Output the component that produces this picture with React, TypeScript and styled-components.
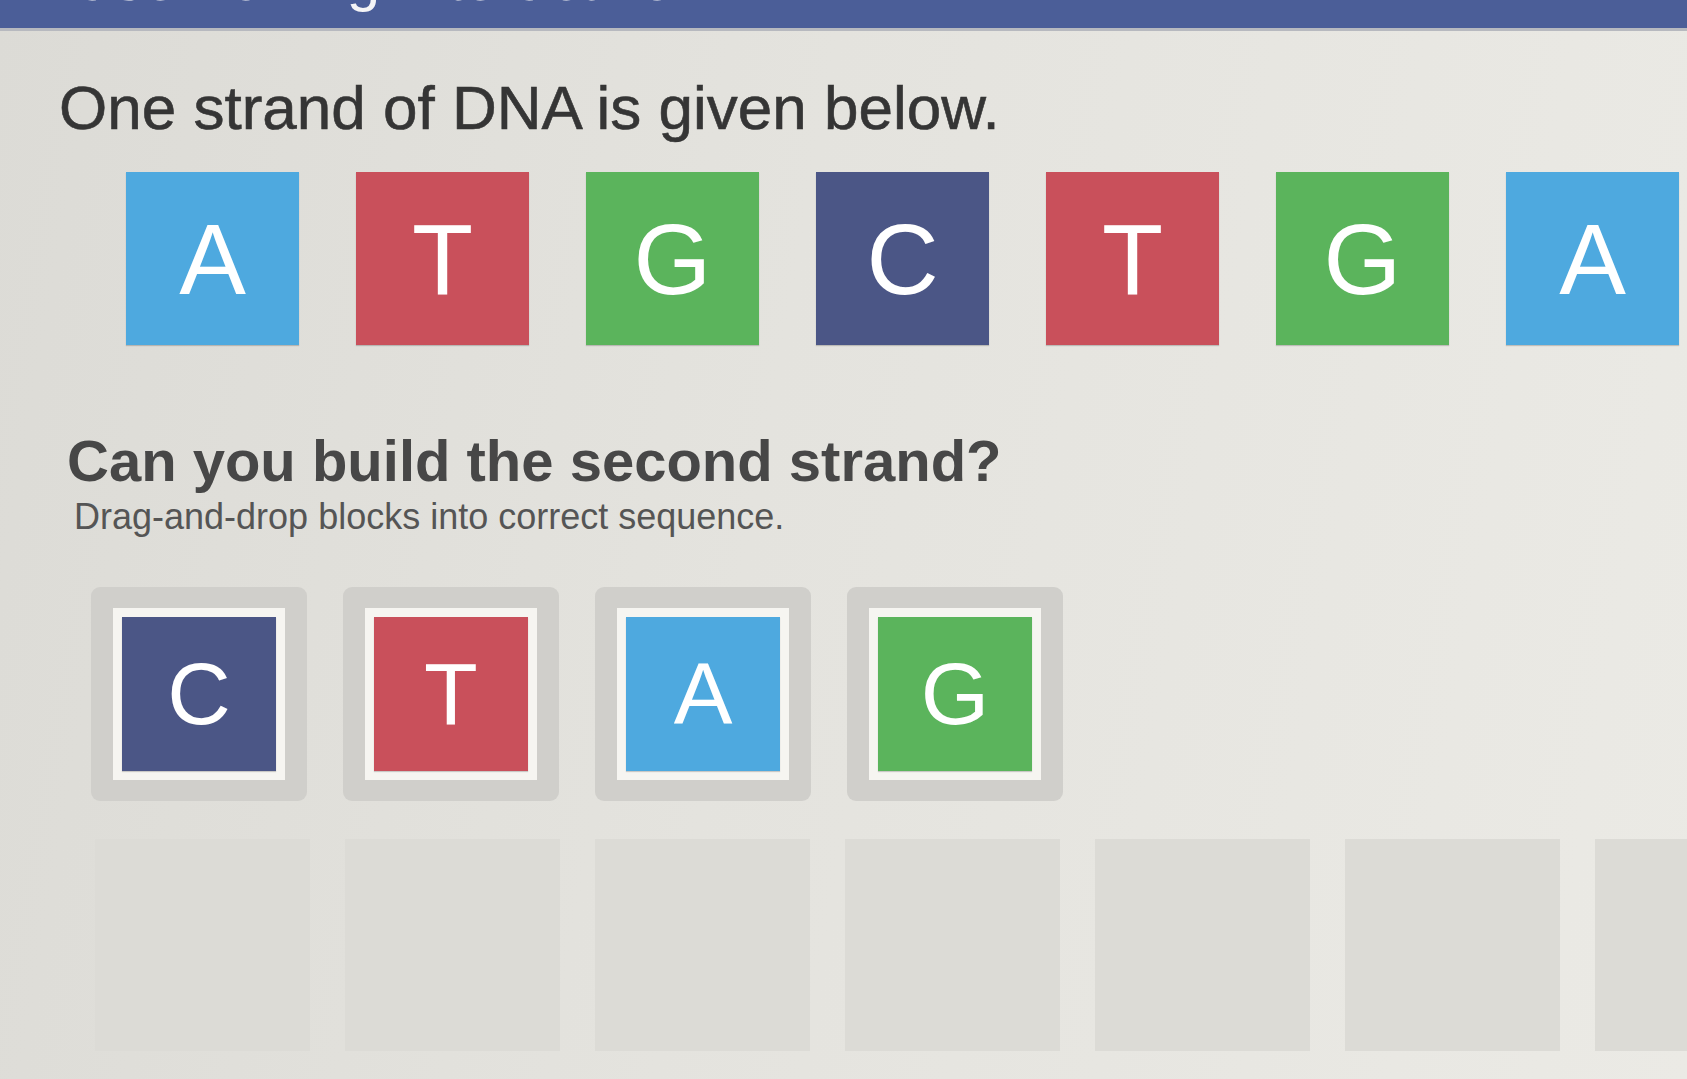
import styled, { createGlobalStyle } from "styled-components";

const GlobalStyle = createGlobalStyle`
  html, body {
    margin: 0;
    padding: 0;
    overflow: hidden;
  }
  body {
    background: linear-gradient(100deg, #dcdbd6 0%, #e4e3de 45%, #ebeae5 100%);
    font-family: "Liberation Sans", Arial, sans-serif;
  }
`;

type Base = "A" | "T" | "G" | "C";

const baseColors: Record<Base, string> = {
  A: "#4ea9df",
  T: "#c9505b",
  G: "#5bb45c",
  C: "#4b5686",
};

const Page = styled.div`
  width: 1687px;
  height: 1079px;
  display: flex;
  flex-direction: column;
  overflow: hidden;
`;

const TopBar = styled.div`
  height: 28px;
  flex-shrink: 0;
  background: #4b5e98;
  border-bottom: 3px solid #b7b9bf;
  overflow: hidden;
  padding-left: 40px;
`;

const BarTitle = styled.div`
  margin-top: -48px;
  font-size: 60px;
  line-height: 56px;
  color: #f4f4f6;
  white-space: nowrap;
`;

const Content = styled.div`
  padding-left: 59px;
  display: flex;
  flex-direction: column;
`;

const Heading = styled.h1`
  margin: 43px 0 0;
  font-size: 62px;
  line-height: 68px;
  font-weight: 400;
  color: #353535;
  -webkit-text-stroke: 0.6px #353535;
`;

const StrandRow = styled.div`
  margin: 30px 0 0 67px;
  display: flex;
  gap: 57px;
`;

const Block = styled.div<{ $base: Base; $size: number; $font: number }>`
  width: ${(p) => p.$size}px;
  height: ${(p) => p.$size}px;
  flex-shrink: 0;
  background: ${(p) => baseColors[p.$base]};
  color: #ffffff;
  font-size: ${(p) => p.$font}px;
  line-height: 1;
  display: flex;
  align-items: center;
  justify-content: center;
  box-shadow: 0 1px 1px rgba(0, 0, 0, 0.18);
`;

const Question = styled.h2`
  margin: 84px 0 0 8px;
  font-size: 58px;
  line-height: 64px;
  font-weight: 700;
  color: #474747;
`;

const Hint = styled.p`
  margin: 3px 0 0 15px;
  font-size: 36px;
  line-height: 42px;
  color: #555555;
`;

const TileRow = styled.div`
  margin: 49px 0 0 32px;
  display: flex;
  gap: 36px;
`;

const Tile = styled.div`
  width: 216px;
  height: 214px;
  box-sizing: border-box;
  padding: 21px 22px;
  background: #d0cfcb;
  border-radius: 9px;
  display: flex;
  align-items: center;
  justify-content: center;
`;

const TileFrame = styled.div`
  padding: 9px;
  background: #f6f5f1;
`;

const SlotRow = styled.div`
  margin: 38px 0 0 36px;
  display: flex;
  gap: 35px;
`;

const Slot = styled.div`
  width: 215px;
  height: 212px;
  flex-shrink: 0;
  background: #dcdbd6;
`;

const givenStrand: Base[] = ["A", "T", "G", "C", "T", "G", "A"];
const pieces: Base[] = ["C", "T", "A", "G"];

export default function App() {
  return (
    <Page>
      <GlobalStyle />
      <TopBar>
        <BarTitle>Base Pairing Interactive</BarTitle>
      </TopBar>
      <Content>
        <Heading>One strand of DNA is given below.</Heading>
        <StrandRow>
          {givenStrand.map((b, i) => (
            <Block key={i} $base={b} $size={173} $font={100}>
              {b}
            </Block>
          ))}
        </StrandRow>

        <Question>Can you build the second strand?</Question>
        <Hint>Drag-and-drop blocks into correct sequence.</Hint>

        <TileRow>
          {pieces.map((b) => (
            <Tile key={b}>
              <TileFrame>
                <Block $base={b} $size={154} $font={88}>
                  {b}
                </Block>
              </TileFrame>
            </Tile>
          ))}
        </TileRow>

        <SlotRow>
          {givenStrand.map((_, i) => (
            <Slot key={i} />
          ))}
        </SlotRow>
      </Content>
    </Page>
  );
}
